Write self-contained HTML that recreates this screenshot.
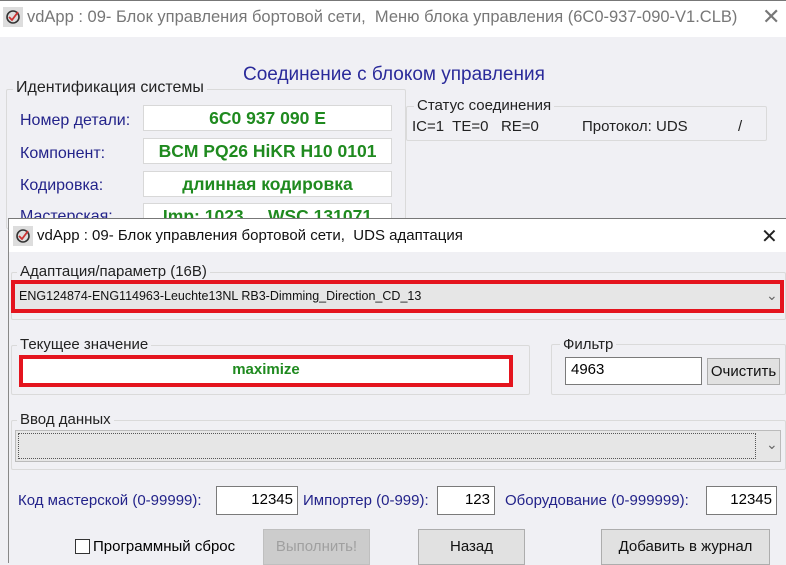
<!DOCTYPE html>
<html><head><meta charset="utf-8"><style>
*{margin:0;padding:0;box-sizing:border-box}
body{width:786px;height:563px;overflow:hidden;background:#f0f0f4;font-family:"Liberation Sans","DejaVu Sans",sans-serif;position:relative;color:#000}
.a{position:absolute;white-space:nowrap}
.lbl{color:#23238a;font-size:16px}
.fld{background:#fff;border:1px solid #d8d8d8;color:#1f8a1f;font-weight:bold;font-size:17.5px;text-align:center;line-height:24px}
.grp{border:1px solid #dadada;border-radius:2px}
.gl{background:#f0f0f4;padding:0 3px;font-size:15px;color:#222}
.btn{background:#e1e1e1;border:1px solid #adadad;font-size:15px;text-align:center;color:#111}
.inp{background:#fff;border:1px solid #7a7a7a;font-size:15px}
.bl{color:#23238a;font-size:15px}
</style></head><body>
<div class="a" style="left:0;top:0;width:786px;height:37px;background:#fff;border-top:1px solid #777"></div>
<svg class="a" style="left:3px;top:7px" width="20" height="20" viewBox="0 0 20 20"><rect x="0" y="0" width="20" height="20" fill="#ddd"/><circle cx="10" cy="10" r="6" fill="none" stroke="#333" stroke-width="1.6"/><path d="M6 10l3 3 6-8" stroke="#c33" stroke-width="1.8" fill="none"/></svg>
<div class="a" style="left:27px;top:8px;font-size:16.5px;color:#777">vdApp : 09- Блок управления бортовой сети,&nbsp; Меню блока управления (6C0-937-090-V1.CLB)</div>
<div class="a" style="left:762px;top:4px;font-size:22px;color:#777">✕</div>
<div class="a" style="left:243px;top:64px;font-size:19px;color:#2a2a9a">Соединение с блоком управления</div>
<div class="a grp" style="left:6px;top:89px;width:400px;height:140px"></div>
<div class="a gl" style="left:13px;top:79px;font-size:16px">Идентификация системы</div>
<div class="a lbl" style="left:20px;top:112px">Номер детали:</div>
<div class="a lbl" style="left:20px;top:145px">Компонент:</div>
<div class="a lbl" style="left:20px;top:177px">Кодировка:</div>
<div class="a lbl" style="left:20px;top:208px">Мастерская:</div>
<div class="a fld" style="left:143px;top:105px;width:249px;height:26px">6C0 937 090 E</div>
<div class="a fld" style="left:143px;top:138px;width:249px;height:26px">BCM PQ26 HiKR H10 0101</div>
<div class="a fld" style="left:143px;top:171px;width:249px;height:26px">длинная кодировка</div>
<div class="a fld" style="left:143px;top:203px;width:249px;height:26px">Imp: 1023 &nbsp; &nbsp; WSC 131071</div>
<div class="a grp" style="left:406px;top:106px;width:361px;height:35px"></div>
<div class="a gl" style="left:414px;top:97px">Статус соединения</div>
<div class="a" style="left:412px;top:118px;font-size:15px;color:#222">IC=1&nbsp; TE=0&nbsp;&nbsp; RE=0</div>
<div class="a" style="left:582px;top:118px;font-size:15px;color:#222">Протокол: UDS</div>
<div class="a" style="left:738px;top:118px;font-size:15px;color:#222">/</div>
<div class="a" style="left:8px;top:218px;width:778px;height:345px;background:#f0f0f4;border-left:1px solid #888;border-top:1px solid #777"></div>
<div class="a" style="left:9px;top:219px;width:777px;height:33px;background:#fff"></div>
<svg class="a" style="left:13px;top:226px" width="20" height="20" viewBox="0 0 20 20"><rect x="0" y="0" width="20" height="20" fill="#ddd"/><circle cx="10" cy="10" r="6" fill="none" stroke="#333" stroke-width="1.6"/><path d="M6 10l3 3 6-8" stroke="#c33" stroke-width="1.8" fill="none"/></svg>
<div class="a" style="left:37px;top:227px;font-size:15px;color:#111">vdApp : 09- Блок управления бортовой сети,&nbsp; UDS адаптация</div>
<div class="a" style="left:761px;top:224px;font-size:20px;color:#222">✕</div>
<div class="a grp" style="left:11px;top:272px;width:775px;height:48px"></div>
<div class="a gl" style="left:17px;top:263px">Адаптация/параметр (16B)</div>
<div class="a" style="left:11px;top:280px;width:773px;height:33px;border:4px solid #e4141e;background:#e6e6e6;font-size:12.5px;padding:5px 4px;color:#111">ENG124874-ENG114963-Leuchte13NL RB3-Dimming_Direction_CD_13</div>
<div class="a" style="left:766px;top:287px;font-size:14px;color:#666">⌄</div>
<div class="a grp" style="left:11px;top:345px;width:519px;height:50px"></div>
<div class="a gl" style="left:17px;top:336px">Текущее значение</div>
<div class="a" style="left:19px;top:355px;width:494px;height:32px;border:4px solid #e4141e;background:#fff;color:#1f8a1f;font-weight:bold;font-size:15px;text-align:center;line-height:22px">maximize</div>
<div class="a grp" style="left:551px;top:344px;width:235px;height:51px"></div>
<div class="a gl" style="left:560px;top:336px">Фильтр</div>
<div class="a inp" style="left:565px;top:357px;width:137px;height:28px;padding:3px 5px">4963</div>
<div class="a btn" style="left:707px;top:358px;width:73px;height:27px;line-height:25px">Очистить</div>
<div class="a grp" style="left:11px;top:420px;width:775px;height:50px"></div>
<div class="a gl" style="left:17px;top:411px">Ввод данных</div>
<div class="a" style="left:15px;top:430px;width:766px;height:32px;border:1px solid #bbb;background:#e6e6e6"></div>
<div class="a" style="left:18px;top:433px;width:738px;height:26px;border:1px dotted #555"></div>
<div class="a" style="left:766px;top:436px;font-size:14px;color:#666">⌄</div>
<div class="a bl" style="left:18px;top:492px">Код мастерской (0-99999):</div>
<div class="a inp" style="left:216px;top:486px;width:82px;height:29px;text-align:right;padding:4px 4px">12345</div>
<div class="a bl" style="left:303px;top:492px">Импортер (0-999):</div>
<div class="a inp" style="left:437px;top:486px;width:58px;height:29px;text-align:right;padding:4px 4px">123</div>
<div class="a bl" style="left:505px;top:492px">Оборудование (0-999999):</div>
<div class="a inp" style="left:706px;top:486px;width:71px;height:29px;text-align:right;padding:4px 4px">12345</div>
<div class="a" style="left:75px;top:539px;width:15px;height:15px;border:1px solid #333;background:#fff"></div>
<div class="a" style="left:93px;top:538px;font-size:15px">Программный сброс</div>
<div class="a btn" style="left:263px;top:529px;width:107px;height:36px;line-height:34px;color:#a0a0a0;background:#ccc;border-color:#bfbfbf">Выполнить!</div>
<div class="a btn" style="left:418px;top:529px;width:107px;height:36px;line-height:34px">Назад</div>
<div class="a btn" style="left:601px;top:529px;width:169px;height:36px;line-height:34px">Добавить в журнал</div>
</body></html>
